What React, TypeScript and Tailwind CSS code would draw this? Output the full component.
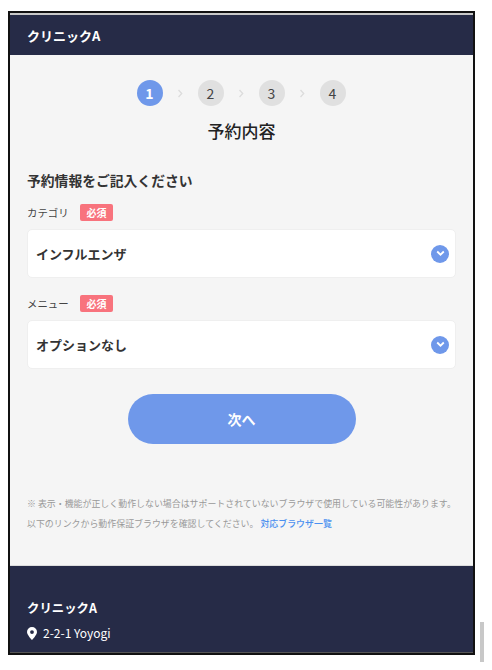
import React from "react";

const font = { fontFamily: '"Noto Sans CJK JP", "Noto Sans", sans-serif' };

function Step({ n, active }: { n: number; active?: boolean }) {
  return (
    <div className={`w-[26px] h-[26px] rounded-full flex items-center justify-center text-[14px] pt-[1px] ${active ? "bg-[#6f98ea] text-white font-bold" : "bg-[#e0e0e0] text-[#444]"}`}>
      {n}
    </div>
  );
}

function Chevron() {
  return (
    <svg width="7" height="9" viewBox="0 0 7 9" fill="none" stroke="#dcdcdc" strokeWidth="1.3">
      <path d="M1.5 1l3.2 3.5L1.5 8" />
    </svg>
  );
}

function Field({ label, value }: { label: string; value: string }) {
  return (
    <div className="flex flex-col">
      <div className="flex items-center h-[17px]">
        <span className="text-[10.4px] text-[#444] w-[53px]">{label}</span>
        <span className="w-[33px] h-[17px] rounded-[2px] bg-[#f8737d] text-white text-[10px] font-bold flex items-center justify-center">必須</span>
      </div>
      <div className="mt-[8px] h-[49px] bg-white rounded-[5px] border border-[#efefef] flex items-center justify-between pl-[8px] pr-[6px]">
        <span className="text-[13px] font-bold text-[#333]">{value}</span>
        <span className="w-[18px] h-[18px] rounded-full bg-[#6f98ea] flex items-center justify-center">
          <svg width="9" height="7" viewBox="0 0 9 7" fill="none" stroke="#fff" strokeWidth="1.8">
            <path d="M1.2 1.5l3.3 3.2 3.3-3.2" />
          </svg>
        </span>
      </div>
    </div>
  );
}

export default function App() {
  return (
    <div className="relative w-[492px] h-[670px] bg-white overflow-hidden" style={font}>
      <div className="ml-[8px] mt-[11px] absolute w-[467px] h-[644px] border-[2px] border-[#111] flex flex-col">
        <div className="h-[2px] bg-[#c8c8c8]" />
        <header className="h-[40px] bg-[#262b47] flex items-center px-[17px] pt-[2px] text-white font-bold text-[13px]">クリニックA</header>
        <main className="flex-1 bg-[#f5f5f5] flex flex-col px-[17px] border-b border-[#ddd]">
          <div className="flex items-center justify-center gap-[14px] mt-[25px] -ml-[1px]">
            <Step n={1} active />
            <Chevron />
            <Step n={2} />
            <Chevron />
            <Step n={3} />
            <Chevron />
            <Step n={4} />
          </div>
          <h1 className="text-center text-[17px] font-medium text-[#222] mt-[13px] leading-[24px]">予約内容</h1>
          <h2 className="text-[13.8px] font-bold text-[#333] mt-[27px] leading-[20px]">予約情報をご記入ください</h2>
          <div className="flex flex-col gap-[17px] mt-[14px]">
            <Field label="カテゴリ" value="インフルエンザ" />
            <Field label="メニュー" value="オプションなし" />
          </div>
          <button className="self-center mt-[25px] w-[228px] h-[50px] rounded-full bg-[#6f98ea] text-white font-bold text-[14px]">次へ</button>
          <p className="mt-[50px] text-[8.94px] leading-[19.5px] text-[#999] whitespace-nowrap">
            ※ 表示・機能が正しく動作しない場合はサポートされていないブラウザで使用している可能性があります。
            <br />
            以下のリンクから動作保証ブラウザを確認してください。 <span className="text-[#4a90f0] font-medium">対応ブラウザ一覧</span>
          </p>
        </main>
        <footer className="h-[87px] bg-[#262b47] text-white px-[17px] pt-[33px] border-b border-[#555]">
          <div className="font-bold text-[12.4px] leading-[18px]">クリニックA</div>
          <div className="flex items-center gap-[6px] mt-[8px] text-[12px] leading-[16px]">
            <svg width="10" height="13" viewBox="0 0 10 13" fill="#fff">
              <path fillRule="evenodd" d="M5 0a5 5 0 0 1 5 5c0 3-5 8-5 8S0 8 0 5a5 5 0 0 1 5-5zm0 3.2a1.9 1.9 0 1 0 0 3.8 1.9 1.9 0 0 0 0-3.8z" />
            </svg>
            <span>2-2-1 Yoyogi</span>
          </div>
        </footer>
      </div>
      <div className="absolute left-[480px] top-[622px] w-[4px] h-[40px] bg-[#c8c8c8]" />
    </div>
  );
}
